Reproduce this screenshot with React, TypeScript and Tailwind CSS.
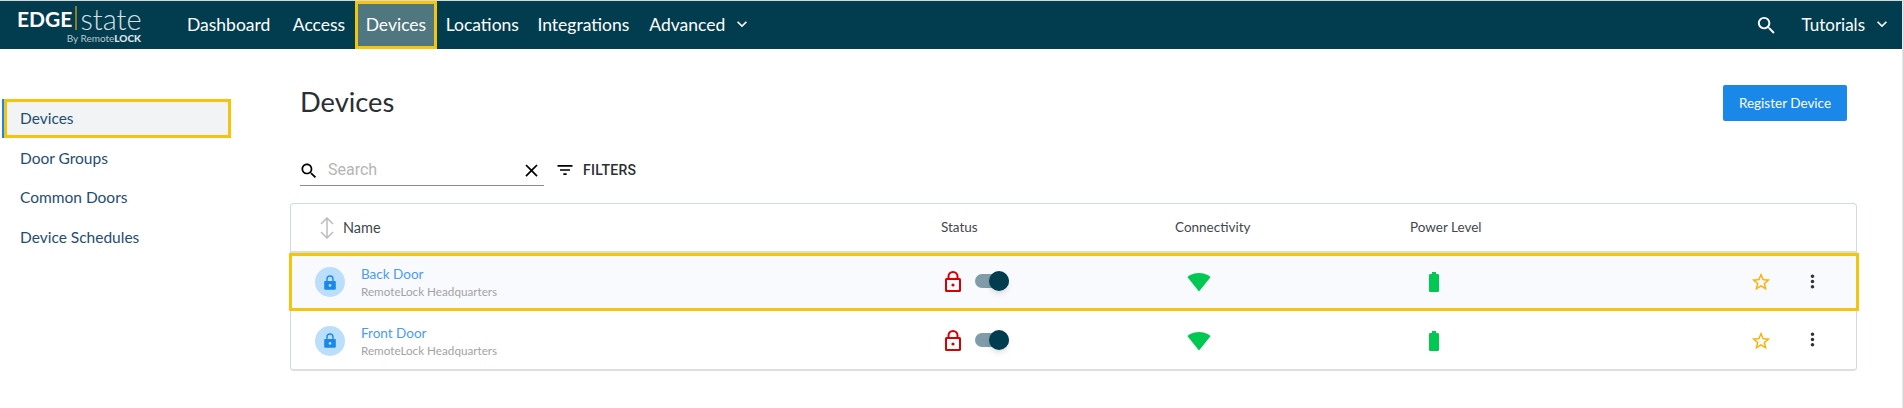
const navItems = ['Dashboard', 'Access', 'Devices', 'Locations', 'Integrations'];
const sideItems = ['Door Groups', 'Common Doors', 'Device Schedules'];
const doors = [
  { id: 1, name: 'Back Door', highlighted: true },
  { id: 2, name: 'Front Door', highlighted: false },
];

// Material icon paths, all on a 24x24 box
const Icon = ({ d, className }: { d: string; className: string }) => (
  <svg viewBox="0 0 24 24" fill="currentColor" className={className}>
    <path d={d} />
  </svg>
);
const searchPath =
  'M15.5 14h-.79l-.28-.27C15.41 12.59 16 11.11 16 9.5 16 5.91 13.09 3 9.5 3S3 5.91 3 9.5 5.91 16 9.5 16c1.61 0 3.09-.59 4.23-1.57l.27.28v.79l5 4.99L20.49 19l-4.99-5zm-6 0C7.01 14 5 11.99 5 9.5S7.01 5 9.5 5 14 7.01 14 9.5 11.99 14 9.5 14z';
const chevronPath = 'M16.59 8.59L12 13.17 7.41 8.59 6 10l6 6 6-6z';
const closePath =
  'M19 6.41L17.59 5 12 10.59 6.41 5 5 6.41 10.59 12 5 17.59 6.41 19 12 13.41 17.59 19 19 17.59 13.41 12z';
const filterPath = 'M10 18h4v-2h-4v2zM3 6v2h18V6H3zm3 7h12v-2H6v2z';
const starPath =
  'M22 9.24l-7.19-.62L12 2 9.19 8.63 2 9.24l5.46 4.73L5.82 21 12 17.27 18.18 21l-1.63-7.03L22 9.24zM12 15.4l-3.76 2.27 1-4.28-3.32-2.88 4.38-.38L12 6.1l1.71 4.04 4.38.38-3.32 2.88 1 4.28L12 15.4z';
const dotsPath =
  'M12 8c1.1 0 2-.9 2-2s-.9-2-2-2-2 .9-2 2 .9 2 2 2zm0 2c-1.1 0-2 .9-2 2s.9 2 2 2 2-.9 2-2-.9-2-2-2zm0 6c-1.1 0-2 .9-2 2s.9 2 2 2 2-.9 2-2-.9-2-2-2z';
const wifiPath = 'M12.01 21.49L23.64 7c-.45-.34-4.93-4-11.64-4C5.28 3 .81 6.66.36 7l11.63 14.49.01.01.01-.01z';
const batteryPath =
  'M15.67 4H14V2h-4v2H8.33C7.6 4 7 4.6 7 5.33v15.33C7 21.4 7.6 22 8.33 22h7.33c.74 0 1.34-.6 1.34-1.33V5.33C17 4.6 16.4 4 15.67 4z';

const RowLock = () => (
  <svg width="12" height="15" viewBox="0 0 12 15" fill="#1a88e8">
    <path d="M3 6V4a3 3 0 0 1 6 0v2" fill="none" stroke="#1a88e8" strokeWidth="1.4" />
    <path d="M1 6h10a.8.8 0 0 1 .8.8v7a1 1 0 0 1-1 1H1.2a1 1 0 0 1-1-1v-7A.8.8 0 0 1 1 6Z" />
    <circle cx="6" cy="10.4" r="1.3" fill="#bbdefb" />
  </svg>
);

const StatusLock = () => (
  <svg width="16" height="21" viewBox="0 0 16 21" fill="none" stroke="#d80000" strokeWidth="2">
    <path d="M3.500 8V5.500a4.500 4.500 0 0 1 9 0V8" />
    <rect x="1" y="8" width="14" height="12" rx="0.5" />
    <circle cx="8" cy="14" r="1.6" fill="#d80000" stroke="none" />
  </svg>
);

const Toggle = () => (
  <div className="relative h-[14px] w-[34px] rounded-full bg-[#7f9ca8]">
    <div className="absolute -top-[3px] right-0 h-[20px] w-[20px] rounded-full bg-[#023c4f] shadow-md" />
  </div>
);

export default function App() {
  return (
    <div className="h-[408px] w-[1903px] overflow-hidden border-r border-[#e8e8e8] bg-white font-['Lato',sans-serif]">
      <div className="h-px bg-[#d8d8d8]" />
      <header className="flex h-[48px] items-center bg-[#023c4f] text-white">
        <div className="ml-[17px] w-[126px] shrink-0">
          <div className="flex h-[26px] items-center leading-none">
            <span className="text-[21px] font-bold">EDGE</span>
            <span className="mx-[3px] h-[24px] w-[2px] shrink-0 bg-[#8a7a2a]" />
            <span className="text-[29px] font-light text-[#d6e0e4]">state</span>
          </div>
          <div className="pr-[2px] text-right text-[10px] leading-[14px] text-[#b9c7cc]">
            By Remote<span className="font-black text-[#dfe6e9]">LOCK</span>
          </div>
        </div>
        <nav className="ml-[34px] flex items-center text-[17.5px]">
          {navItems.map((item) =>
            item === 'Devices' ? (
              <a
                key={item}
                className="flex h-[48px] items-center border-[3px] border-[#f4c50c] bg-[#50767f] px-[7.5px] leading-none"
              >
                {item}
              </a>
            ) : (
              <a key={item} className="px-[10px] first:pr-[12.4px] [&:nth-child(4)]:pl-[9px] [&:nth-child(4)]:pr-[8.5px]">
                {item}
              </a>
            ),
          )}
          <a className="flex items-center pl-[10px]">
            Advanced
            <Icon d={chevronPath} className="mb-[2px] ml-[7px] h-[20px] w-[20px]" />
          </a>
        </nav>
        <div className="ml-auto flex items-center">
          <Icon d={searchPath} className="h-[23px] w-[23px]" />
          <span className="ml-[23px] text-[17px]">Tutorials</span>
          <Icon d={chevronPath} className="mb-[2px] ml-[7px] mr-[10px] h-[20px] w-[20px]" />
        </div>
      </header>

      <div className="flex">
        <aside className="w-[290px] shrink-0 pt-[50px] text-[15.5px] text-[#1d4d74]">
          <div className="ml-[2px] h-[39px] w-[229px] border-l-[2px] border-[#1a88e8]">
            <div className="flex h-full items-center border-[3px] border-[#f4c50c] bg-[#f2f3f5] pl-[13px]">Devices</div>
          </div>
          <div className="pt-[0.5px]">
            {sideItems.map((item) => (
              <div key={item} className="flex h-[39.5px] items-center pl-[20px]">
                {item}
              </div>
            ))}
          </div>
        </aside>

        <main className="w-[1567px] shrink-0">
          <div className="mt-[36px] flex h-[36px] items-center justify-between px-[10px]">
            <h1 className="mb-[2px] text-[27.3px] leading-none text-[#2a2f33]">Devices</h1>
            <button className="h-[36px] w-[124px] rounded-[2px] bg-[#1a88e8] text-[13.5px] text-white">Register Device</button>
          </div>

          <div className="mt-[30px] flex items-start pl-[10px]">
            <div className="flex h-[35px] w-[244px] items-start border-b border-[#8c8c8c] pt-[10px]">
              <Icon d={searchPath} className="-ml-[1px] h-[20px] w-[20px] text-black" />
              <span className="ml-[9px] flex-1 font-['Roboto',sans-serif] text-[16px] leading-[18px] text-[#b5b5b5]">Search</span>
              <Icon d={closePath} className="-mt-[1.5px] mr-[2.5px] h-[21px] w-[21px] text-black" />
            </div>
            <div className="ml-[11px] flex items-center pt-[9px] font-['Roboto',sans-serif] text-[14px] font-medium leading-none tracking-[0.3px] text-[#2a2f33]">
              <Icon d={filterPath} className="h-[20px] w-[20px] text-black" />
              <span className="ml-[8px]">FILTERS</span>
            </div>
          </div>

          <section className="mt-[17px] h-[168px] rounded-[4px] border border-[#cfdbe0] border-b-2 border-b-[#dcdfe2]">
            <div className="grid h-[49px] grid-cols-[650px_234px_235px_1fr] items-center border-b-2 border-[#d5e0e6] text-[13.5px] text-[#3f474d]">
              <div className="flex items-center pl-[29px]">
                <svg width="14" height="22" viewBox="0 0 14 22" fill="none" stroke="#bdbdbd" strokeWidth="1.5">
                  <path d="M7 1v20M1 7l6-6 6 6M1 15l6 6 6-6" />
                </svg>
                <span className="ml-[9px] text-[14.5px]">Name</span>
              </div>
              <div>Status</div>
              <div>Connectivity</div>
              <div>Power Level</div>
            </div>
            {doors.map((door) => (
              <div
                key={door.id}
                className={
                  door.highlighted
                    ? 'relative -ml-[2px] -mr-[3px] grid h-[58px] grid-cols-[649px_234px_235px_1fr] items-center border-[3px] border-[#f4c50c] bg-[#f9fafe]'
                    : 'grid h-[59px] grid-cols-[650px_234px_235px_1fr] items-center'
                }
              >
                <div className={door.highlighted ? 'flex items-center pl-[23px]' : 'flex items-center pl-[24px]'}>
                  <div className="flex h-[30px] w-[30px] items-center justify-center rounded-full bg-[#bbdefb]">
                    <RowLock />
                  </div>
                  <div className="ml-[16px]">
                    <div className="text-[13.5px] leading-[18px] text-[#4b9bf5]">{door.name}</div>
                    <div className="text-[11.7px] leading-[16px] text-[#a3a3a3]">RemoteLock Headquarters</div>
                  </div>
                </div>
                <div className="flex items-center pl-[4px]">
                  <div className="mb-[1px]">
                    <StatusLock />
                  </div>
                  <div className="mb-[2px] ml-[14px]">
                    <Toggle />
                  </div>
                </div>
                <div className="pl-[12px]">
                  <Icon d={wifiPath} className="h-[24px] w-[24px] text-[#00c853]" />
                </div>
                <div className="flex items-center justify-between">
                  <div className="pl-[12px]">
                    <Icon d={batteryPath} className="h-[24px] w-[24px] text-[#00c853]" />
                  </div>
                  <div className="flex items-center">
                    <Icon d={starPath} className="h-[22px] w-[22px] text-[#ffb000]" />
                    <Icon d={dotsPath} className="mb-[2px] ml-[30px] mr-[33.5px] h-[21px] w-[21px] text-[#333]" />
                  </div>
                </div>
              </div>
            ))}
          </section>
        </main>
      </div>
    </div>
  );
}
